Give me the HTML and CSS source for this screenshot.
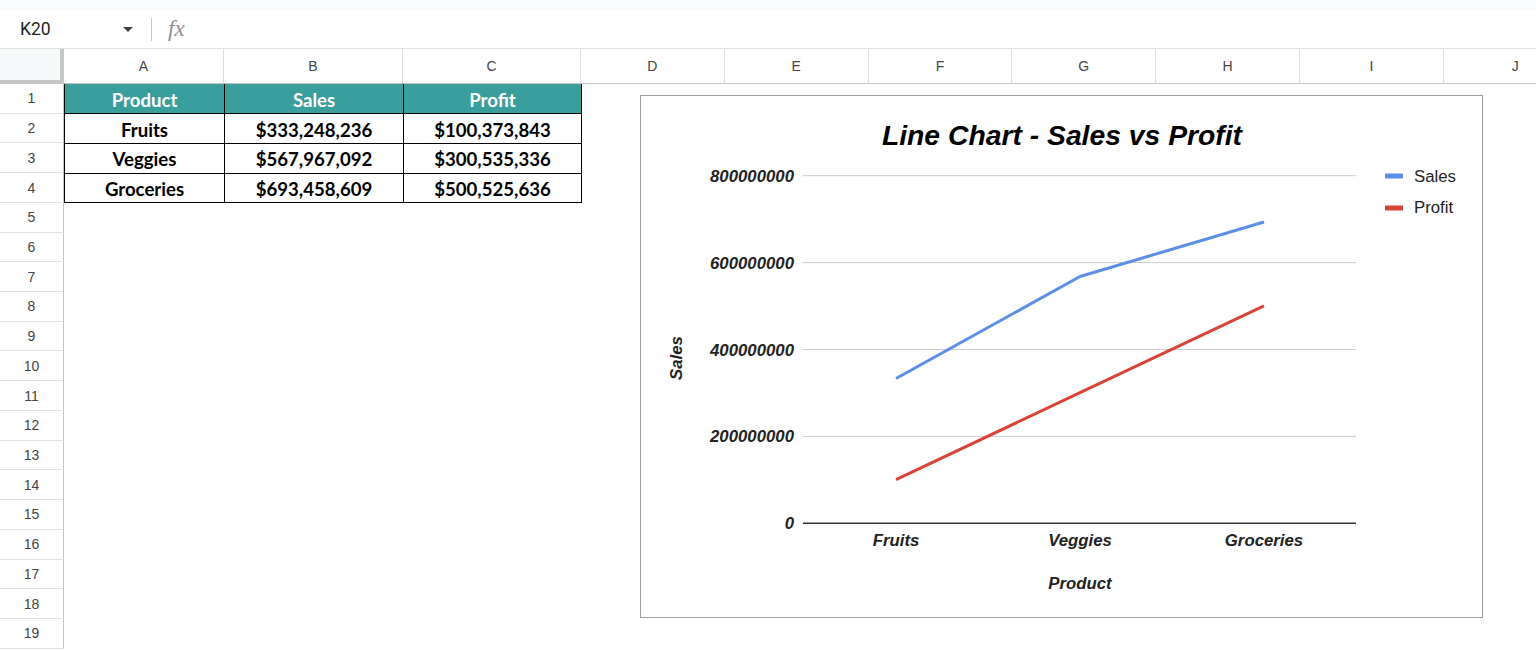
FILE: index.html
```html
<!DOCTYPE html>
<html lang="en">
<head>
  <meta charset="UTF-8">
  <title>Sales vs Profit - Sheet</title>
  <meta name="viewport" content="width=device-width, initial-scale=1.0">
  <link rel="stylesheet" href="styles.css">
</head>
<body>
  <div class="topstrip"></div>

  <div class="formula-bar">
    <div class="name-box">
      <span>K20</span>
      <span class="caret"></span>
    </div>
    <div class="divider"></div>
    <div class="fx">fx</div>
  </div>

  <div class="sheet">
    <div class="col-heads">
      <div class="corner"></div>
      <div class="col-head col-a">A</div>
      <div class="col-head col-b">B</div>
      <div class="col-head col-c">C</div>
      <div class="col-head">D</div>
      <div class="col-head">E</div>
      <div class="col-head">F</div>
      <div class="col-head">G</div>
      <div class="col-head">H</div>
      <div class="col-head">I</div>
      <div class="col-head">J</div>
    </div>

    <div class="grid-body">
      <div class="row-heads">
        <div class="row-head">1</div>
        <div class="row-head">2</div>
        <div class="row-head">3</div>
        <div class="row-head">4</div>
        <div class="row-head">5</div>
        <div class="row-head">6</div>
        <div class="row-head">7</div>
        <div class="row-head">8</div>
        <div class="row-head">9</div>
        <div class="row-head">10</div>
        <div class="row-head">11</div>
        <div class="row-head">12</div>
        <div class="row-head">13</div>
        <div class="row-head">14</div>
        <div class="row-head">15</div>
        <div class="row-head">16</div>
        <div class="row-head">17</div>
        <div class="row-head">18</div>
        <div class="row-head">19</div>
      </div>

      <div class="cells">
        <table class="data">
          <tr>
            <th class="col-a">Product</th>
            <th class="col-b">Sales</th>
            <th class="col-c">Profit</th>
          </tr>
          <tr><td>Fruits</td><td>$333,248,236</td><td>$100,373,843</td></tr>
          <tr><td>Veggies</td><td>$567,967,092</td><td>$300,535,336</td></tr>
          <tr><td>Groceries</td><td>$693,458,609</td><td>$500,525,636</td></tr>
        </table>
      </div>
    </div>

    <!-- floating chart over the cells -->
    <div class="chart">
      <svg width="841" height="520" viewBox="0 0 841 520">
        <text class="chart-title" x="421" y="49" text-anchor="middle">Line Chart - Sales vs Profit</text>

        <g class="gridlines">
          <line x1="162" y1="79.7" x2="715" y2="79.7"/>
          <line x1="162" y1="166.6" x2="715" y2="166.6"/>
          <line x1="162" y1="253.5" x2="715" y2="253.5"/>
          <line x1="162" y1="340.4" x2="715" y2="340.4"/>
        </g>
        <line class="baseline" x1="162" y1="427.3" x2="715" y2="427.3"/>

        <g class="tick" text-anchor="end">
          <text x="153" y="85.7">800000000</text>
          <text x="153" y="172.6">600000000</text>
          <text x="153" y="259.5">400000000</text>
          <text x="153" y="346.4">200000000</text>
          <text x="153" y="433.3">0</text>
        </g>

        <g class="tick" text-anchor="middle">
          <text x="255" y="450">Fruits</text>
          <text x="439" y="450">Veggies</text>
          <text x="623" y="450">Groceries</text>
        </g>

        <polyline class="series-sales" points="255,282.5 439,180.5 623,126"/>
        <polyline class="series-profit" points="255,383.7 439,296.7 623,209.8"/>

        <text class="axis-title" x="439" y="493" text-anchor="middle">Product</text>
        <text class="axis-title" transform="translate(41,262) rotate(-90)" text-anchor="middle">Sales</text>

        <rect class="key-sales" x="744" y="77.5" width="18" height="5"/>
        <text class="legend" x="773" y="85.7">Sales</text>
        <rect class="key-profit" x="744" y="109.5" width="18" height="5"/>
        <text class="legend" x="773" y="117.3">Profit</text>
      </svg>
    </div>
  </div>
</body>
</html>
```

FILE: styles.css
```css
body { margin: 0; font-family: "Liberation Sans", Arial, sans-serif; background: #fff; overflow: hidden; }

.topstrip { height: 10px; background: #f9fbfd; }

.formula-bar { height: 38px; display: flex; align-items: center; border-bottom: 1px solid #e1e3e1; }
.name-box { width: 113px; padding-left: 20px; display: flex; align-items: center; justify-content: space-between; font-family: Roboto, sans-serif; font-size: 17.5px; color: #1f1f1f; }
.caret { width: 0; height: 0; border-left: 5px solid transparent; border-right: 5px solid transparent; border-top: 5px solid #444; }
.divider { width: 1px; height: 23px; background: #c7c7c7; margin-left: 18px; }
.fx { margin-left: 16px; font-family: "Liberation Serif", serif; font-style: italic; font-size: 23px; color: #8f8f8f; }

.sheet { position: relative; }

.col-heads { display: flex; height: 34px; border-bottom: 1px solid #c4c4c4; }
.corner { flex: none; box-sizing: border-box; background: #f8f9fa; border-right: 4px solid #c4c7c5; border-bottom: 3px solid #c4c7c5; width: 64px; height: 34px; }
.col-head { width: 143.8px; flex: none; box-sizing: border-box; border-right: 1px solid #dadce0; display: flex; align-items: center; justify-content: center; font-size: 14px; color: #444; }
.col-head.col-a { width: 160px; }
.col-head.col-b { width: 179px; }
.col-head.col-c { width: 178px; }

.grid-body { display: flex; }
.row-heads { width: 64px; flex: none; }
.row-head { height: 29.72px; box-sizing: border-box; border-bottom: 1px solid #e2e2e2; border-right: 1px solid #c4c4c4; display: flex; align-items: center; justify-content: center; font-size: 14px; color: #444; }

.cells { flex: 1; }
.data { border-collapse: collapse; font-family: Lato, "Open Sans", sans-serif; font-weight: 700; font-size: 18.6px; color: #000; }
.data tr { height: 29.72px; }
.data th, .data td { padding: 2px 0 0; text-align: center; border: 1px solid #000; }
.data th { background: #3a9e9c; color: #fff; border-top: none; }
.data .col-a { width: 159px; }
.data .col-b { width: 178px; }
.data .col-c { width: 177px; }

/* chart */
.chart { position: absolute; left: 640px; top: 46px; width: 843px; height: 523px; box-sizing: border-box; border: 1px solid #9e9e9e; background: #fff; }
.chart svg { display: block; }
.chart-title { font: italic 700 28.3px "Liberation Sans", Arial, sans-serif; fill: #000; }
.tick, .axis-title { font: italic 700 16.8px "Liberation Sans", Arial, sans-serif; fill: #222; }
.legend { font: 400 16.8px "Liberation Sans", Arial, sans-serif; fill: #222; }
.gridlines line { stroke: #cccccc; stroke-width: 1; }
.baseline { stroke: #333; stroke-width: 1.5; }
.series-sales { fill: none; stroke: #5b8fe6; stroke-width: 3; stroke-linejoin: round; }
.series-profit { fill: none; stroke: #d9443a; stroke-width: 3; stroke-linejoin: round; }
.key-sales { fill: #5b8fe6; }
.key-profit { fill: #d9443a; }
```
